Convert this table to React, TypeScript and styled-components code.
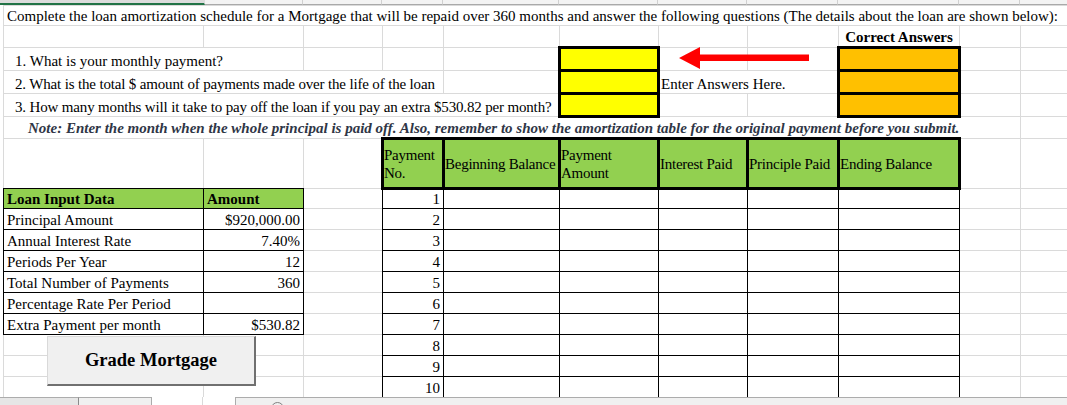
import React from 'react';
import styled, { createGlobalStyle } from 'styled-components';

const GlobalStyle = createGlobalStyle`
  html, body { margin: 0; padding: 0; background: #ffffff; }
  body { font-family: "Liberation Serif", "Times New Roman", serif; }
`;

const COLS = [200, 100, 79, 61, 116, 99, 89, 91, 121, 61, 70];
const ROW_H = [20, 22, 23, 23, 23, 22, 50, 20, 21, 21, 21, 21, 21, 21, 21, 21, 21];

const Page = styled.div`
  position: relative;
  width: 1067px;
  height: 405px;
  overflow: hidden;
  background: #ffffff;
  display: flex;
  flex-direction: column;
`;

const ColHeaderStrip = styled.div`
  display: flex;
  flex: none;
  height: 5px;
  background: #efefef;
`;

const ColHeaderSeg = styled.div<{ $w: number; $active?: boolean }>`
  flex: none;
  width: ${(p) => p.$w}px;
  height: 5px;
  box-sizing: border-box;
  background: ${(p) => (p.$active ? '#dcdcdc' : '#f3f3f3')};
  border-right: 1px solid ${(p) => (p.$active ? 'transparent' : '#d0d0d0')};
  border-bottom: ${(p) => (p.$active ? '2px solid #217346' : '1px solid #a9a9a9')};
`;

const SheetBody = styled.div`
  display: flex;
  flex: none;
  height: 392px;
  overflow: hidden;
`;

const Gutter = styled.div`
  flex: none;
  width: 3px;
  background: #ffffff;
`;

const Sheet = styled.table`
  border-collapse: collapse;
  table-layout: fixed;
  flex: none;
  width: ${COLS.reduce((a, b) => a + b, 0)}px;
  font-family: "Liberation Serif", "Times New Roman", serif;
  font-size: 15px;
`;

const Row = styled.tr<{ $h: number }>`
  height: ${(p) => p.$h}px;
`;

type Frame = 'grid' | 'thin' | 'thick';

const Cell = styled.td<{
  $align?: 'left' | 'right' | 'center';
  $bold?: boolean;
  $italic?: boolean;
  $fill?: string;
  $frame?: Frame;
  $pl?: number;
  $pr?: number;
  $valign?: 'top' | 'middle' | 'bottom';
  $color?: string;
  $tight?: number;
}>`
  padding: 0 ${(p) => p.$pr ?? 3}px 0 ${(p) => p.$pl ?? 3}px;
  border: ${(p) =>
    p.$frame === 'thick' ? '3px solid #000000' : p.$frame === 'thin' ? '1px double #000000' : '1px solid #dadada'};
  background: ${(p) => p.$fill ?? 'transparent'};
  text-align: ${(p) => p.$align ?? 'left'};
  vertical-align: ${(p) => p.$valign ?? 'bottom'};
  font-weight: ${(p) => (p.$bold ? 700 : 400)};
  font-style: ${(p) => (p.$italic ? 'italic' : 'normal')};
  color: ${(p) => p.$color ?? '#000000'};
  letter-spacing: ${(p) => (p.$tight ? `-${p.$tight}px` : 'normal')};
  white-space: nowrap;
  overflow: hidden;
  font-size: 15px;
  line-height: 17px;
`;

const HeadCell = styled(Cell).attrs({ $frame: 'thick' as Frame, $valign: 'middle' as const, $pl: 0, $pr: 0 })`
  background: #92d050;
  letter-spacing: -0.25px;
  line-height: 18px;
`;

const BottomBar = styled.div`
  display: flex;
  flex: none;
  height: 8px;
`;

const BarSeg = styled.div<{ $w?: number; $bg: string; $edge?: boolean; $divider?: string }>`
  position: relative;
  flex: ${(p) => (p.$w ? 'none' : '1')};
  width: ${(p) => (p.$w ? `${p.$w}px` : 'auto')};
  box-sizing: border-box;
  background: ${(p) => p.$bg};
  border-top: ${(p) => (p.$edge ? '1px solid #acacac' : 'none')};
  border-right: ${(p) => (p.$divider ? `1px solid ${p.$divider}` : 'none')};
`;

const NewSheetCircle = styled.div`
  position: absolute;
  left: 35px;
  top: 4px;
  width: 11px;
  height: 11px;
  border: 1px solid #808080;
  border-radius: 50%;
`;

const GradeButton = styled.button`
  position: absolute;
  left: 47px;
  top: 336px;
  width: 209px;
  height: 50px;
  box-sizing: border-box;
  padding: 0;
  background: #f0f0f0;
  border-top: 1px solid #d9d9d9;
  border-left: 1px solid #d9d9d9;
  border-right: 2px solid #707070;
  border-bottom: 2px solid #707070;
  font-family: "Liberation Serif", "Times New Roman", serif;
  font-weight: 700;
  font-size: 18.5px;
  color: #000000;
`;

const ArrowShape = styled.svg`
  position: absolute;
  left: 679px;
  top: 47px;
`;

const YELLOW = '#ffff00';
const ORANGE = '#ffc000';
const GREEN = '#92d050';

const loanRows: [string, string][] = [
  ['Principal Amount', '$920,000.00'],
  ['Annual Interest Rate', '7.40%'],
  ['Periods Per Year', '12'],
  ['Total Number of Payments', '360'],
  ['Percentage Rate Per Period', ''],
  ['Extra Payment per month', '$530.82'],
];

const Empty = ({ n }: { n: number }) => (
  <>
    {Array.from({ length: n }).map((_, i) => (
      <Cell key={i} />
    ))}
  </>
);

export default function App() {
  const dataRows = Array.from({ length: 10 }, (_, i) => i);
  return (
    <>
      <GlobalStyle />
      <Page>
        <ColHeaderStrip>
          <ColHeaderSeg $w={3 + COLS[0] + 2} $active />
          {COLS.slice(1).map((w, i) => (
            <ColHeaderSeg key={i} $w={i === 0 ? w - 2 : w} />
          ))}
        </ColHeaderStrip>
        <SheetBody>
          <Gutter />
          <Sheet>
            <colgroup>
              {COLS.map((w, i) => (
                <col key={i} style={{ width: w }} />
              ))}
            </colgroup>
            <tbody>
              <Row $h={ROW_H[0]}>
                <Cell colSpan={11} $pl={3}>
                  Complete the loan amortization schedule for a Mortgage that will be repaid over 360 months and answer
                  the following questions (The details about the loan are shown below):
                </Cell>
              </Row>
              <Row $h={ROW_H[1]}>
                <Empty n={8} />
                <Cell $bold $align="center">
                  Correct Answers
                </Cell>
                <Empty n={2} />
              </Row>
              <Row $h={ROW_H[2]}>
                <Cell colSpan={2} $pl={11}>
                  1. What is your monthly payment?
                </Cell>
                <Empty n={3} />
                <Cell $frame="thick" $fill={YELLOW} />
                <Empty n={2} />
                <Cell $frame="thick" $fill={ORANGE} />
                <Empty n={2} />
              </Row>
              <Row $h={ROW_H[3]}>
                <Cell colSpan={4} $pl={11} $tight={0.16}>
                  2. What is the total $ amount of payments made over the life of the loan
                </Cell>
                <Empty n={1} />
                <Cell $frame="thick" $fill={YELLOW} />
                <Cell colSpan={2} $pl={1}>
                  Enter Answers Here.
                </Cell>
                <Cell $frame="thick" $fill={ORANGE} />
                <Empty n={2} />
              </Row>
              <Row $h={ROW_H[4]}>
                <Cell colSpan={5} $pl={11} $tight={0.16}>
                  3. How many months will it take to pay off the loan if you pay an extra $530.82 per month?
                </Cell>
                <Cell $frame="thick" $fill={YELLOW} />
                <Empty n={2} />
                <Cell $frame="thick" $fill={ORANGE} />
                <Empty n={2} />
              </Row>
              <Row $h={ROW_H[5]}>
                <Cell colSpan={10} $pl={24} $bold $italic $color="#2f3646">
                  Note: Enter the month when the whole principal is paid off. Also, remember to show the amortization
                  table for the original payment before you submit.
                </Cell>
                <Empty n={1} />
              </Row>
              <Row $h={ROW_H[6]}>
                <Empty n={3} />
                <HeadCell>
                  Payment
                  <br />
                  No.
                </HeadCell>
                <HeadCell>Beginning Balance</HeadCell>
                <HeadCell>
                  Payment
                  <br />
                  Amount
                </HeadCell>
                <HeadCell>Interest Paid</HeadCell>
                <HeadCell>Principle Paid</HeadCell>
                <HeadCell>Ending Balance</HeadCell>
                <Empty n={2} />
              </Row>
              {dataRows.map((i) => {
                let a: React.ReactNode;
                if (i === 0) {
                  a = (
                    <>
                      <Cell $frame="thin" $fill={GREEN} $bold>
                        Loan Input Data
                      </Cell>
                      <Cell $frame="thin" $fill={GREEN} $bold>
                        Amount
                      </Cell>
                    </>
                  );
                } else if (i <= loanRows.length) {
                  const [label, value] = loanRows[i - 1];
                  a = (
                    <>
                      <Cell $frame="thin">{label}</Cell>
                      <Cell $frame="thin" $align="right">
                        {value}
                      </Cell>
                    </>
                  );
                } else {
                  a = <Empty n={2} />;
                }
                return (
                  <Row key={i} $h={ROW_H[7 + i]}>
                    {a}
                    <Cell />
                    <Cell $frame="thin" $align="right">
                      {i + 1}
                    </Cell>
                    <Cell $frame="thin" />
                    <Cell $frame="thin" />
                    <Cell $frame="thin" />
                    <Cell $frame="thin" />
                    <Cell $frame="thin" />
                    <Empty n={2} />
                  </Row>
                );
              })}
            </tbody>
          </Sheet>
        </SheetBody>
        <BottomBar>
          <BarSeg $w={79} $bg="#e6e6e6" $edge $divider="#8a8a8a" />
          <BarSeg $w={73} $bg="#f0f0f0" $edge $divider="#acacac" />
          <BarSeg $w={51} $bg="#ffffff" $divider="#dadada" />
          <BarSeg $w={33} $bg="#ffffff" $divider="#acacac" />
          <BarSeg $bg="#f0f0f0" $edge>
            <NewSheetCircle />
          </BarSeg>
        </BottomBar>
        <ArrowShape width="130" height="22" viewBox="0 0 130 22">
          <polygon points="0,11 21,0 21,7.5 130,7.5 130,14 21,14 21,22" fill="#ff0000" />
        </ArrowShape>
        <GradeButton type="button">Grade Mortgage</GradeButton>
      </Page>
    </>
  );
}
